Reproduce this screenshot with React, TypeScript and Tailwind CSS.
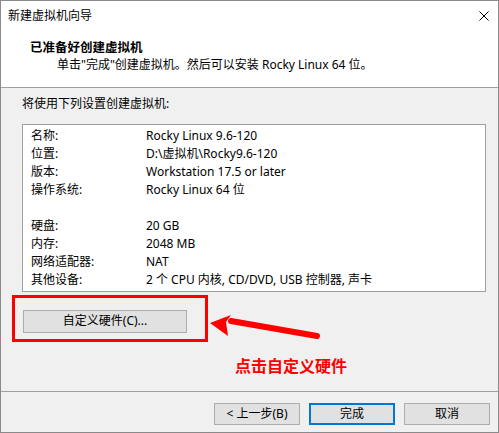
import React from "react";

const rows: [string, string][] = [
  ["名称:", "Rocky Linux 9.6-120"],
  ["位置:", "D:\\虚拟机\\Rocky9.6-120"],
  ["版本:", "Workstation 17.5 or later"],
  ["操作系统:", "Rocky Linux 64 位"],
  ["", ""],
  ["硬盘:", "20 GB"],
  ["内存:", "2048 MB"],
  ["网络适配器:", "NAT"],
  ["其他设备:", "2 个 CPU 内核, CD/DVD, USB 控制器, 声卡"],
];

function WizardButton({
  label,
  focused = false,
}: {
  label: string;
  focused?: boolean;
}): React.ReactElement {
  return (
    <button
      className={
        focused
          ? "w-[86px] h-[22px] bg-[#e1e1e1] border-2 border-[#0078d7] text-[12px] leading-none text-black"
          : "w-[86px] h-[22px] bg-[#e1e1e1] border border-[#adadad] text-[12px] leading-none text-black"
      }
    >
      {label}
    </button>
  );
}

export default function App(): React.ReactElement {
  return (
    <div
      className="w-[499px] h-[433px] border border-[#8a8a8a] bg-[#f0f0f0] flex flex-col text-black overflow-hidden"
      style={{ fontFamily: '"Noto Sans", "Noto Sans CJK SC", sans-serif' }}
    >
      {/* title bar */}
      <div className="h-[29px] bg-white flex items-center justify-between pl-[7px] pr-[9px] shrink-0">
        <span className="text-[12px] leading-[16px]">新建虚拟机向导</span>
        <svg width="10" height="10" viewBox="0 0 10 10" className="mr-[0px]">
          <path d="M0.5 0.5 L9.5 9.5 M9.5 0.5 L0.5 9.5" stroke="#000" strokeWidth="1" />
        </svg>
      </div>

      {/* header */}
      <div className="h-[58px] bg-white border-b border-[#a0a0a0] shrink-0 pt-[9px]">
        <div className="pl-[29px] text-[12.5px] leading-[18px] font-bold">已准备好创建虚拟机</div>
        <div className="pl-[56px] text-[12px] leading-[16px]">
          单击"完成"创建虚拟机。然后可以安装 Rocky Linux 64 位。
        </div>
      </div>

      {/* body */}
      <div className="flex-1 flex flex-col relative">
        <div className="pl-[21px] mt-[7px] text-[12px] leading-[18px]">将使用下列设置创建虚拟机:</div>

        <div className="ml-[21px] mt-[11px] w-[464px] h-[168px] bg-white border border-[#a0a0a0] pt-[2px]">
          {rows.map(([k, v], i) => (
            <div key={i} className="flex h-[18px] items-center text-[12px] leading-[18px]">
              <span className="w-[123px] pl-[8px] shrink-0">{k}</span>
              <span>{v}</span>
            </div>
          ))}
        </div>

        <div className="flex items-start mt-[3px]">
          <div className="ml-[11px] w-[196px] h-[47px] border-[3px] border-[#ff0000] pl-[8px] pt-[9px]">
            <button className="w-[164px] h-[23px] bg-[#e1e1e1] border border-[#adadad] text-[12px] leading-none">
              自定义硬件(C)...
            </button>
          </div>
          <svg width="116" height="36" viewBox="0 0 116 36" className="mt-[10px] -ml-[1px]">
            <path d="M24 16 L110 31" stroke="#ff0000" strokeWidth="6" strokeLinecap="round" />
            <path d="M3 18 L24 10 L19 17 L21 31 Z" fill="#ff0000" />
          </svg>
        </div>

        <div className="ml-[234px] mt-[14px] text-[16px] leading-[20px] font-bold text-[#ff0000]">
          点击自定义硬件
        </div>

        <div className="flex-1" />

        <div className="border-t border-[#a0a0a0] h-[41px] flex items-start justify-end gap-[9px] pr-[8px] pt-[11px]">
          <WizardButton label="< 上一步(B)" />
          <WizardButton label="完成" focused />
          <WizardButton label="取消" />
        </div>
      </div>
    </div>
  );
}
